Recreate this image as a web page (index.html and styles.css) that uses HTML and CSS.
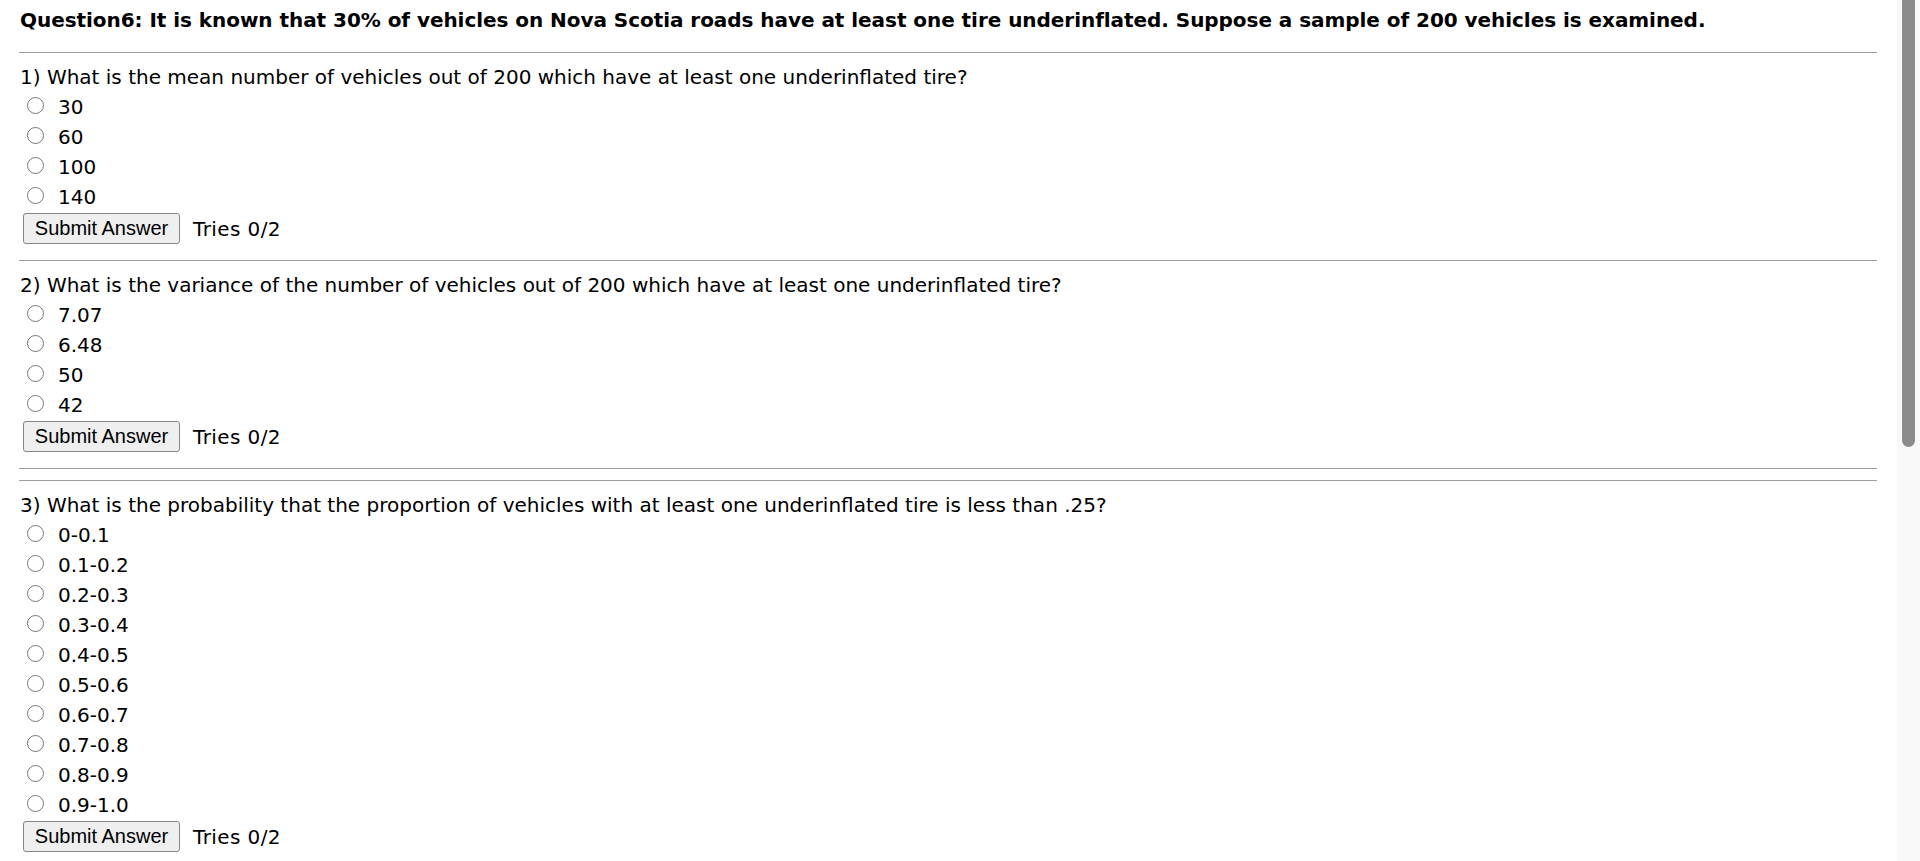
FILE: index.html
```html
<!DOCTYPE html>
<html lang="en">
<head>
<meta charset="utf-8">
<title>Question 6</title>
<link rel="stylesheet" href="styles.css">
</head>
<body>
<div class="page">
  <h1 class="title">Question6: It is known that 30% of vehicles on Nova Scotia roads have at least one tire underinflated. Suppose a sample of 200 vehicles is examined.</h1>
  <hr class="rule">
  <section class="q">
    <div class="qtext">1) What is the mean number of vehicles out of 200 which have at least one underinflated tire?</div>
    <label class="opt"><input type="radio" name="q1"><span>30</span></label>
    <label class="opt"><input type="radio" name="q1"><span>60</span></label>
    <label class="opt"><input type="radio" name="q1"><span>100</span></label>
    <label class="opt"><input type="radio" name="q1"><span>140</span></label>
    <div class="submit"><button type="button" class="btn">Submit Answer</button><span class="tries">Tries 0/2</span></div>
  </section>
  <hr class="rule">
  <section class="q">
    <div class="qtext">2) What is the variance of the number of vehicles out of 200 which have at least one underinflated tire?</div>
    <label class="opt"><input type="radio" name="q2"><span>7.07</span></label>
    <label class="opt"><input type="radio" name="q2"><span>6.48</span></label>
    <label class="opt"><input type="radio" name="q2"><span>50</span></label>
    <label class="opt"><input type="radio" name="q2"><span>42</span></label>
    <div class="submit"><button type="button" class="btn">Submit Answer</button><span class="tries">Tries 0/2</span></div>
  </section>
  <hr class="rule">
  <div class="spacer"></div>
  <hr class="rule">
  <section class="q">
    <div class="qtext">3) What is the probability that the proportion of vehicles with at least one underinflated tire is less than .25?</div>
    <label class="opt"><input type="radio" name="q3"><span>0-0.1</span></label>
    <label class="opt"><input type="radio" name="q3"><span>0.1-0.2</span></label>
    <label class="opt"><input type="radio" name="q3"><span>0.2-0.3</span></label>
    <label class="opt"><input type="radio" name="q3"><span>0.3-0.4</span></label>
    <label class="opt"><input type="radio" name="q3"><span>0.4-0.5</span></label>
    <label class="opt"><input type="radio" name="q3"><span>0.5-0.6</span></label>
    <label class="opt"><input type="radio" name="q3"><span>0.6-0.7</span></label>
    <label class="opt"><input type="radio" name="q3"><span>0.7-0.8</span></label>
    <label class="opt"><input type="radio" name="q3"><span>0.8-0.9</span></label>
    <label class="opt"><input type="radio" name="q3"><span>0.9-1.0</span></label>
    <div class="submit"><button type="button" class="btn">Submit Answer</button><span class="tries">Tries 0/2</span></div>
  </section>
</div>
<div class="scrollbar" aria-hidden="true"><div class="thumb"></div></div>
</body>
</html>
```

FILE: styles.css
```css
html, body {
  margin: 0;
  padding: 0;
  background: #ffffff;
  overflow: hidden;
}

body {
  font-family: "DejaVu Sans", Verdana, sans-serif;
  font-size: 20px;
  color: #000000;
}

.page {
  padding: 0 43px 0 19px;
  display: flex;
  flex-direction: column;
}

.title {
  margin: 0;
  padding: 8px 0 0 1px;
  height: 52px;
  box-sizing: border-box;
  font-size: 20px;
  font-weight: bold;
  line-height: 24px;
  letter-spacing: -0.05px;
  white-space: nowrap;
}

.rule {
  margin: 0;
  border: 0;
  height: 1px;
  background: #9c9c9c;
}

.spacer {
  height: 11px;
}

.q {
  display: flex;
  flex-direction: column;
  padding: 9px 0 16px 1px;
}

.qtext {
  height: 30px;
  line-height: 30px;
  white-space: nowrap;
}

.opt {
  display: flex;
  align-items: center;
  height: 30px;
  line-height: 30px;
}

.opt input {
  -webkit-appearance: none;
  appearance: none;
  box-sizing: border-box;
  width: 17px;
  height: 17px;
  margin: 0 14px 4px 7px;
  flex: none;
  border: 1.5px solid #777777;
  border-radius: 50%;
  background: #ffffff;
}

.submit {
  display: flex;
  align-items: center;
  height: 31px;
  margin-top: 1px;
}

.btn {
  box-sizing: border-box;
  width: 157px;
  height: 31px;
  margin: 0 0 0 3px;
  padding: 0;
  font-family: "Liberation Sans", Arial, sans-serif;
  font-size: 20px;
  color: #000000;
  background: #efefef;
  border: 1px solid #858585;
  border-radius: 3px;
}

.tries {
  margin-left: 13px;
  letter-spacing: 0.4px;
}

.scrollbar {
  position: fixed;
  top: 0;
  right: 0;
  width: 23px;
  height: 100%;
  background: #f9f9f9;
}

.thumb {
  margin: 0 5px 0 5px;
  width: 13px;
  height: 447px;
  background: #8b8b8b;
  border-radius: 0 0 7px 7px;
}
```
